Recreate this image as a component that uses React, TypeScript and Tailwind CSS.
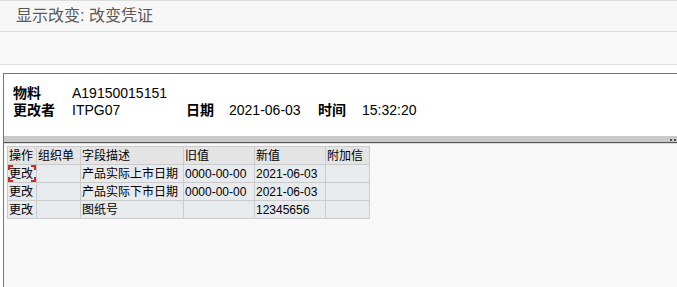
import React from "react";

const font = { fontFamily: '"Liberation Sans", "Noto Sans CJK SC", sans-serif' };

const rows = [
  ["更改", "", "产品实际上市日期", "0000-00-00", "2021-06-03", ""],
  ["更改", "", "产品实际下市日期", "0000-00-00", "2021-06-03", ""],
  ["更改", "", "图纸号", "", "12345656", ""],
];
const heads = ["操作", "组织单", "字段描述", "旧值", "新值", "附加信"];
const widths = ["w-[29px]", "w-[44px]", "w-[103px]", "w-[71px]", "w-[71px]", "w-[44px]"];

export default function App() {
  return (
    <div className="w-[677px] h-[287px] overflow-hidden bg-white flex flex-col" style={font}>
      <div className="h-[32px] shrink-0 bg-[#f7f7f7] border-t border-b border-[#dcdcdc] flex items-center pl-[16px] text-[16px] text-[#5a5a5a] leading-none">
        显示改变: 改变凭证
      </div>
      <div className="h-[33px] shrink-0 bg-[#f8f8f8] border-b border-[#dcdcdc]" />
      <div className="h-[8px] shrink-0 bg-white" />
      <div className="flex-1 ml-[3px] border-l border-t border-[#777777] flex flex-col">
        <div className="h-[62px] shrink-0 bg-white pt-[11px] pl-[9px] text-[14px] leading-[17px] text-black">
          <div className="flex">
            <span className="w-[59px] font-bold">物料</span>
            <span>A19150015151</span>
          </div>
          <div className="flex">
            <span className="w-[59px] font-bold">更改者</span>
            <span className="w-[114px]">ITPG07</span>
            <span className="w-[43px] font-bold">日期</span>
            <span className="w-[89px]">2021-06-03</span>
            <span className="w-[44px] font-bold">时间</span>
            <span>15:32:20</span>
          </div>
        </div>
        <div className="relative h-[6px] shrink-0 bg-[#c9c9c9]">
          <div className="absolute right-[-3px] top-[3px] flex gap-[2px]">
            <span className="w-[2px] h-[2px] bg-[#555]" />
            <span className="w-[2px] h-[2px] bg-[#555]" />
            <span className="w-[2px] h-[2px] bg-[#555]" />
          </div>
        </div>
        <div className="h-px shrink-0 bg-[#555555]" />
        <div className="h-px shrink-0 bg-[#d9d9d9]" />
        <div className="flex-1 bg-[#f8f8f8] pl-[3px] pt-[2px]">
          <table className="border-collapse text-[12px] text-black leading-none">
            <thead>
              <tr className="h-[18px] bg-[#e4e4e4]">
                {heads.map((h, i) => (
                  <th key={i} className={`${widths[i]} border border-[#cbcbcb] font-normal text-left pl-[1px] pr-0 align-middle`}>
                    {h}
                  </th>
                ))}
              </tr>
            </thead>
            <tbody>
              {rows.map((r, ri) => (
                <tr key={ri} className="h-[18px] bg-[#e8ebee]">
                  {r.map((c, ci) => (
                    <td key={ci} className={`${widths[ci]} relative border border-[#cbcbcb] pl-[1px] align-middle whitespace-nowrap`}>
                      {c}
                      {ri === 0 && ci === 0 && (
                        <>
                          <span className="absolute left-0 top-0 w-[5px] h-[2px] bg-[#e02020]" />
                          <span className="absolute left-0 top-0 w-[2px] h-[5px] bg-[#e02020]" />
                          <span className="absolute right-0 top-0 w-[5px] h-[2px] bg-[#e02020]" />
                          <span className="absolute right-0 top-0 w-[2px] h-[5px] bg-[#e02020]" />
                          <span className="absolute left-0 bottom-0 w-[5px] h-[2px] bg-[#e02020]" />
                          <span className="absolute left-0 bottom-0 w-[2px] h-[5px] bg-[#e02020]" />
                          <span className="absolute right-0 bottom-0 w-[5px] h-[2px] bg-[#e02020]" />
                          <span className="absolute right-0 bottom-0 w-[2px] h-[5px] bg-[#e02020]" />
                        </>
                      )}
                    </td>
                  ))}
                </tr>
              ))}
            </tbody>
          </table>
        </div>
      </div>
    </div>
  );
}
